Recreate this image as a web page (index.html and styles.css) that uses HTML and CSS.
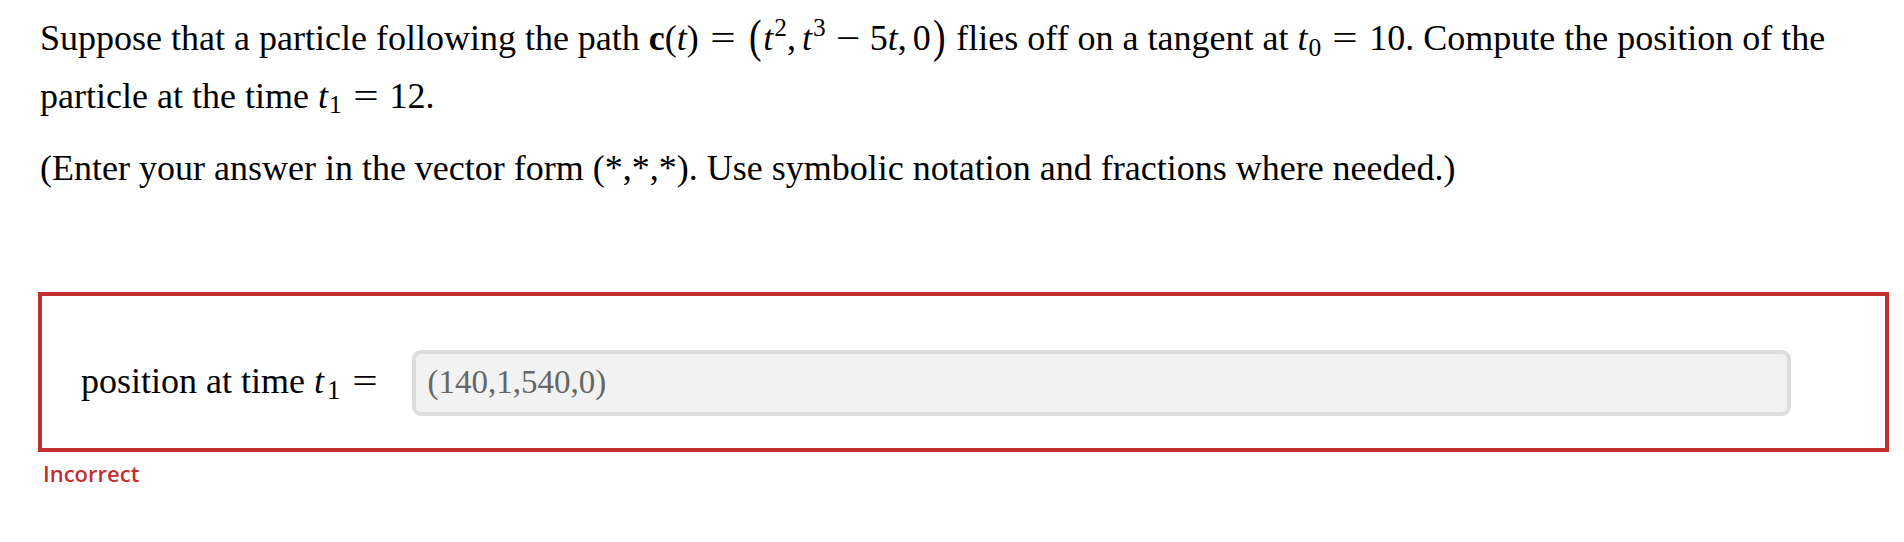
FILE: index.html
```html
<!DOCTYPE html>
<html lang="en">
<head>
<meta charset="utf-8">
<title>Question</title>
<link rel="stylesheet" href="styles.css">
</head>
<body>
<main class="question">
  <p class="q-text"><span class="q-line">Suppose that a particle following the path <span class="math"><b class="mb">c</b><span class="mo">(</span><i class="mi">t</i><span class="mo">)</span><span class="rel">=</span><span class="big">(</span><i class="mi">t</i><sup class="sup">2</sup><span class="mo">,</span><span class="thin"></span><i class="mi">t</i><sup class="sup">3</sup><span class="bin">−</span><span class="mn">5</span><i class="mi">t</i><span class="mo">,</span><span class="thin"></span><span class="mn">0</span><span class="big">)</span></span> flies off on a tangent at <span class="math"><i class="mi">t</i><sub class="sub">0</sub><span class="rel">=</span><span class="mn">10</span></span>. Compute the position of the</span> <span class="q-line">particle at the time <span class="math"><i class="mi">t</i><sub class="sub">1</sub><span class="rel">=</span><span class="mn">12</span></span>.</span></p>
  <p class="q-text q-hint">(Enter your answer in the vector form (*,*,*). Use symbolic notation and fractions where needed.)</p>
  <div class="answer-box">
    <div class="answer-row">
      <label class="answer-label" for="ans">position at time <span class="math"><i class="mi">t</i><sub class="sub sub-wide">1</sub><span class="rel">=</span></span></label>
      <input class="answer-input" id="ans" type="text" value="(140,1,540,0)" readonly>
    </div>
  </div>
  <div class="feedback">Incorrect</div>
</main>
</body>
</html>
```

FILE: styles.css
```css
html, body {
  margin: 0;
  padding: 0;
  background: #ffffff;
}

body {
  font-family: "Liberation Serif", "Times New Roman", serif;
  color: #000000;
}

.question {
  padding: 10px 15px 0 38px;
}

.q-text {
  margin: 0 0 0 2px;
  font-size: 36px;
  line-height: 57.6px;
}

.q-line {
  display: inline;
}

.q-hint {
  margin-top: 15px;
}

.math {
  white-space: nowrap;
}

.mb {
  font-weight: bold;
}

.mi {
  font-style: italic;
}

.rel {
  display: inline-block;
  width: 0.778em;
  text-align: center;
  margin: 0 10px;
  transform: scaleX(1.25);
}

.bin {
  display: inline-block;
  width: 0.778em;
  text-align: center;
  margin: 0 8px;
  transform: scaleX(1.2);
}

.thin {
  display: inline-block;
  width: 6px;
}

.big {
  display: inline-block;
  width: 0.458em;
  text-align: center;
  transform: scale(1.05, 1.28);
  transform-origin: 50% 60%;
}

.sup {
  font-size: 0.707em;
  line-height: 0;
  vertical-align: 0.55em;
  margin-left: 1px;
}

.sub {
  font-size: 0.707em;
  line-height: 0;
  vertical-align: -0.22em;
  margin-left: 1px;
}

.sub-wide {
  margin-left: 3px;
  font-size: 0.75em;
}

.answer-box {
  margin-top: 94px;
  border: 4px solid #c1302f;
  padding: 54px 94px 32px 39px;
}

.answer-row {
  display: flex;
  align-items: baseline;
  gap: 23px;
  height: 66px;
}

.answer-label {
  font-size: 36px;
  line-height: 57.6px;
  white-space: nowrap;
}

.answer-input {
  flex: 1;
  min-width: 0;
  box-sizing: border-box;
  height: 66px;
  margin: 0;
  padding: 0 12px;
  border: 4px solid #dddddd;
  border-radius: 9px;
  background: #f2f2f2;
  color: #666666;
  font-family: "Liberation Serif", "Times New Roman", serif;
  font-size: 33px;
  outline: none;
}

.feedback {
  margin-top: 6px;
  padding-left: 5px;
  font-family: "Open Sans", "Liberation Sans", sans-serif;
  font-weight: 600;
  font-size: 22px;
  line-height: 30px;
  color: #c1302f;
}
```
